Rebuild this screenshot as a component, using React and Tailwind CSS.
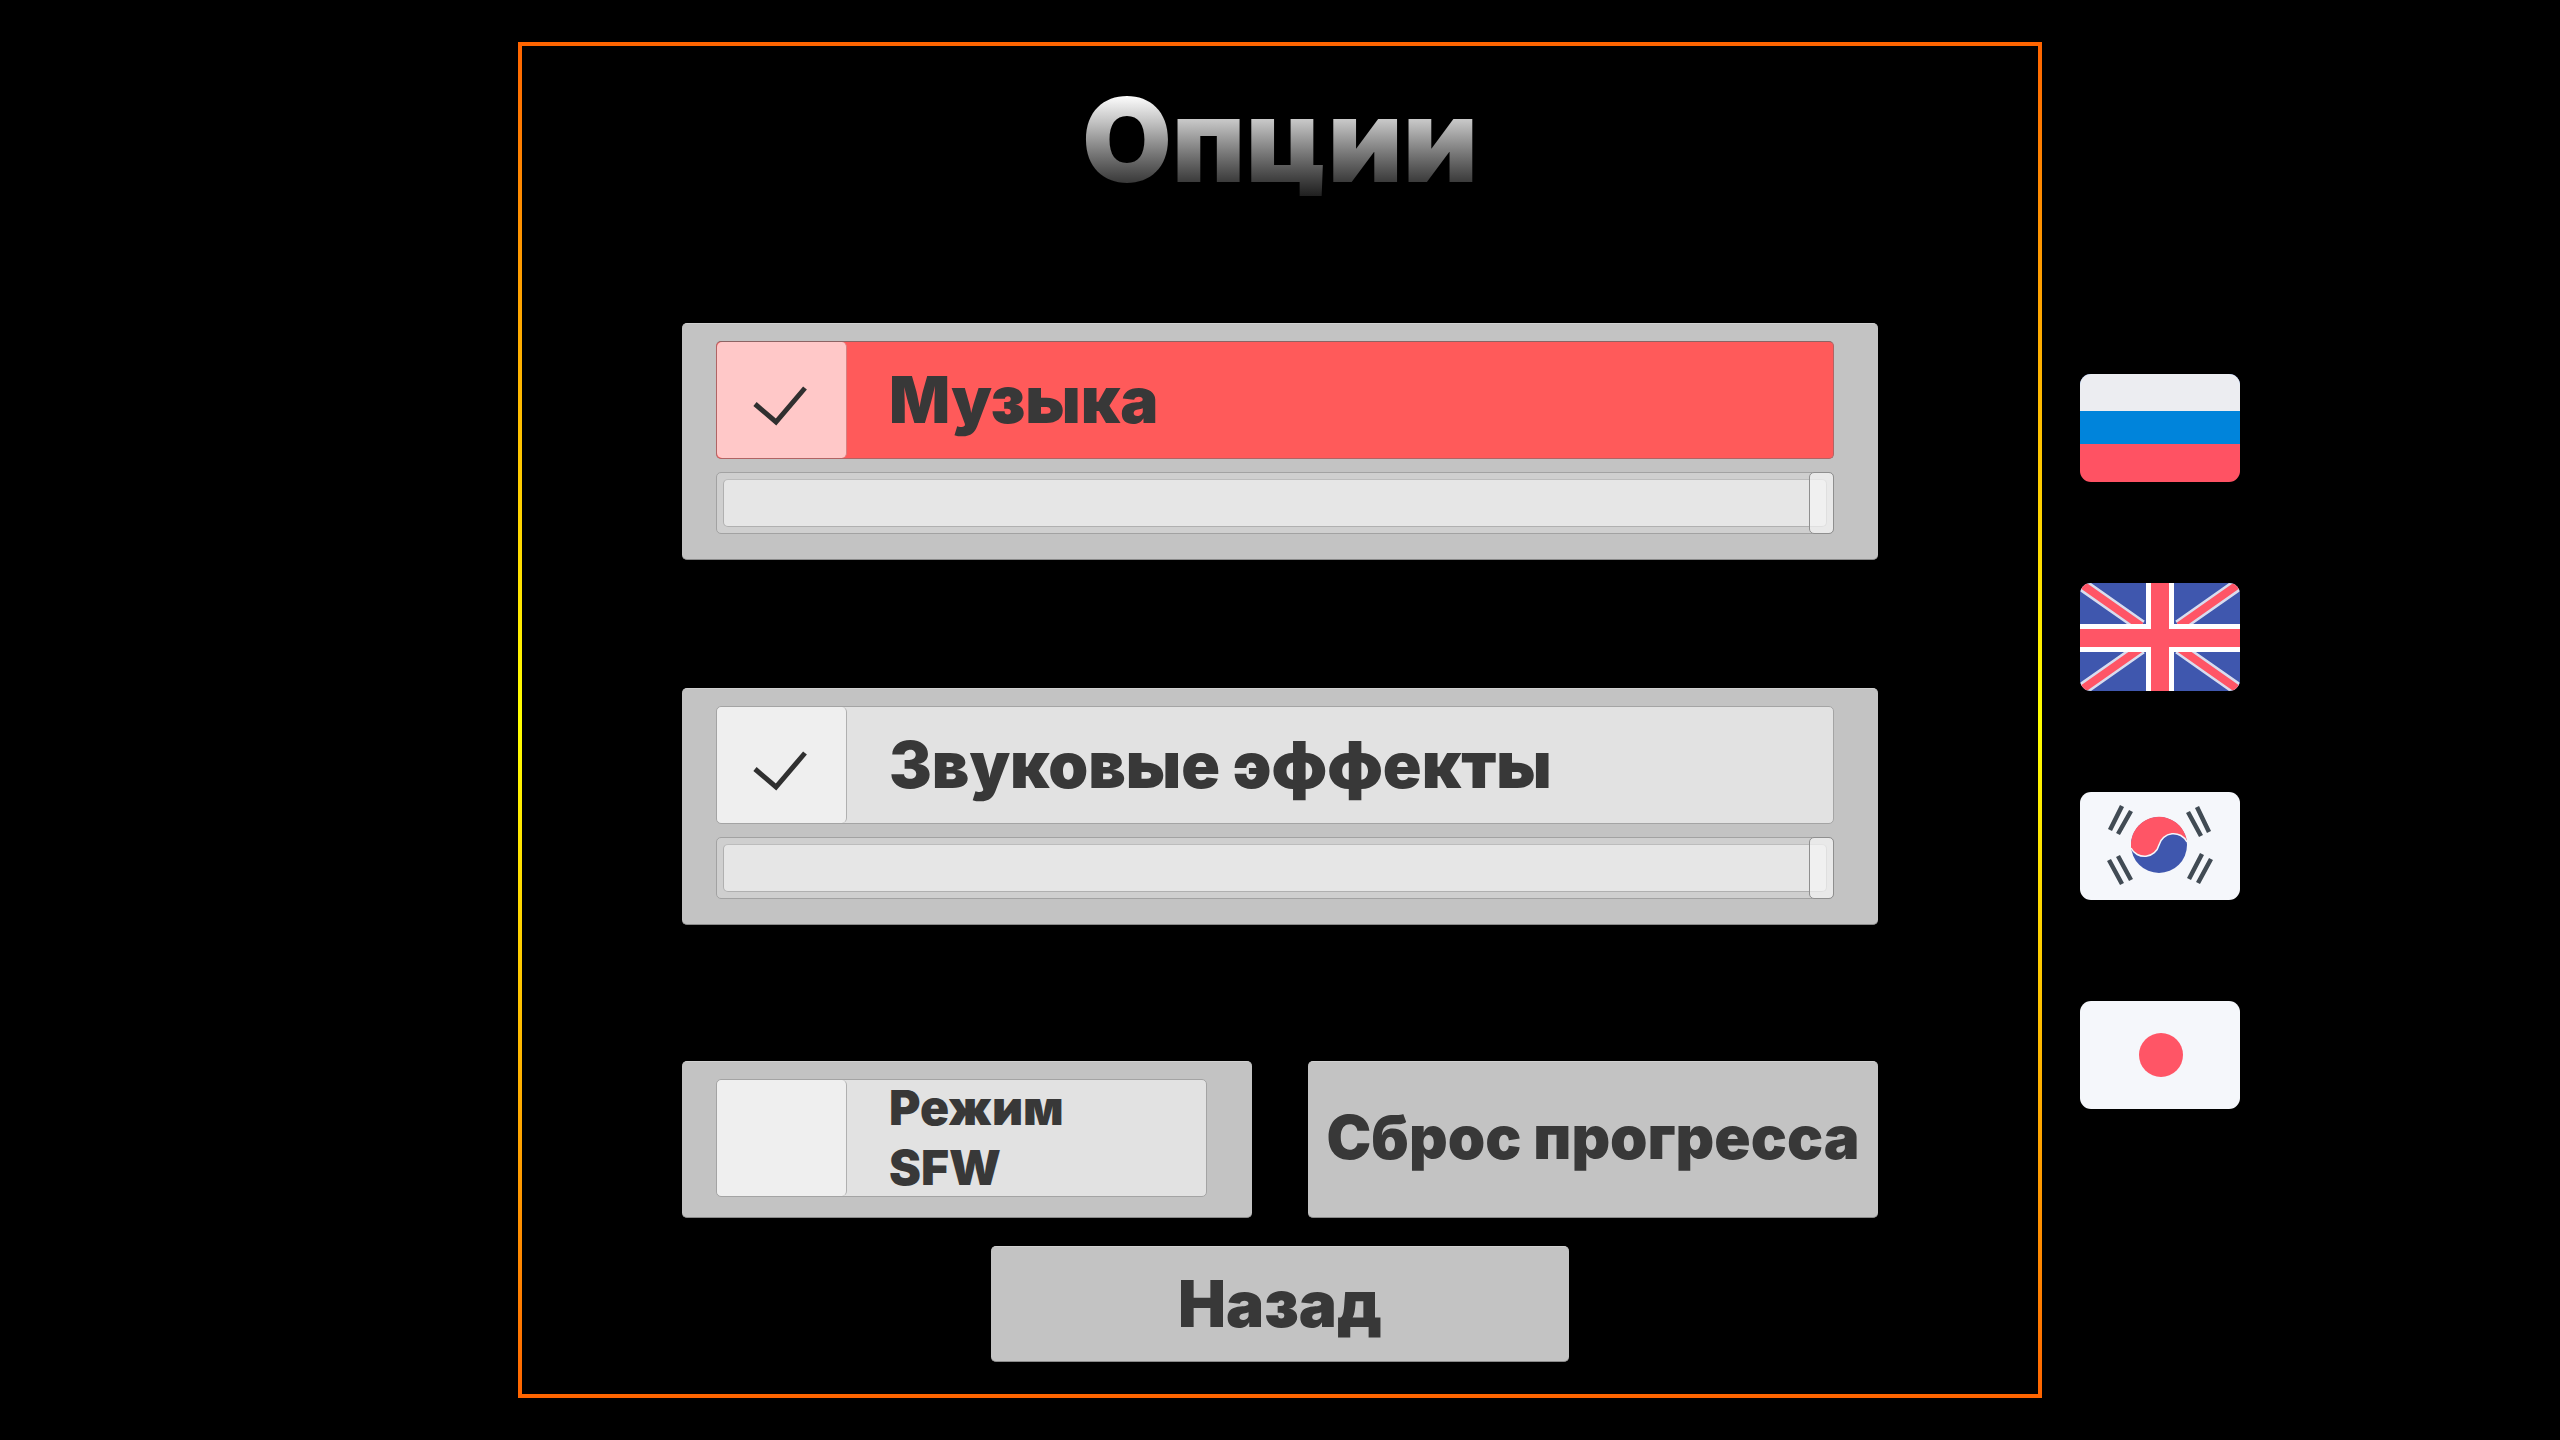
import React, { useState } from 'react';

const RussiaFlag = () => (
  <svg viewBox="0 0 160 108" className="w-full block" aria-hidden="true">
    <rect width="160" height="108" fill="#ff5263" />
    <rect width="160" height="70" fill="#0084db" />
    <rect width="160" height="37" fill="#ecedf1" />
  </svg>
);

const UkFlag = () => (
  <svg viewBox="0 0 160 108" className="w-full block" aria-hidden="true">
    <rect width="160" height="108" fill="#3f57ae" />
    <g stroke="#fff" strokeOpacity="0.8" strokeWidth="13">
      <path d="M-6 -4 61 43M166 -4 99 43M-6 112 61 65M166 112 99 65" />
    </g>
    <g stroke="#ff5566" strokeWidth="8">
      <path d="M-6 -4 61 43M166 -4 99 43M-6 112 61 65M166 112 99 65" />
    </g>
    <path d="M66 0h28v41h66v28H94v39H66V69H0V41h66z" fill="#fff" />
    <path d="M71 0h18v46h71v18H89v44H71V64H0V46h71z" fill="#ff5566" />
  </svg>
);

const KoreaFlag = () => (
  <svg viewBox="0 0 160 108" className="w-full block" aria-hidden="true">
    <rect width="160" height="108" fill="#f5f7fb" />
    <circle cx="79" cy="53" r="28" fill="#3f57ae" />
    <path d="M51 56A28 28 0 0 1 107 50A15 15 0 0 0 79 53A15 15 0 0 1 51 56z" fill="#ff5566" />
    <path d="M107 50A15 15 0 0 0 79 53A15 15 0 0 1 51 56" fill="none" stroke="#f5f7fb" strokeWidth="1.5" />
    <path
      d="M42 14 30 38M51 19 38 42M108 20 121 44M117 15 129 40M29 68 42 92M38 64 51 88M122 62 109 87M131 67 118 91"
      stroke="#414b54"
      strokeWidth="4.5"
    />
  </svg>
);

const JapanFlag = () => (
  <svg viewBox="0 0 160 108" className="w-full block" aria-hidden="true">
    <rect width="160" height="108" fill="#f5f7fb" />
    <circle cx="81" cy="54" r="22" fill="#ff5566" />
  </svg>
);

const languages = [
  { id: 'ru', label: 'Русский', Flag: RussiaFlag },
  { id: 'en', label: 'English', Flag: UkFlag },
  { id: 'ko', label: '한국어', Flag: KoreaFlag },
  { id: 'ja', label: '日本語', Flag: JapanFlag },
];

const Panel = ({ children }) => (
  <div className="flex flex-col gap-[13px] rounded-[5px] border-t border-b border-t-[#d0d0d0] border-b-[#8a8a8a] bg-[#c3c3c3] pt-[17px] pl-[34px] pr-[44px]">
    {children}
  </div>
);

const Toggle = ({ id, checked, onChange, highlighted, small, children }) => (
  <div
    className={`flex h-[118px] items-center rounded-[5px] border ${
      highlighted ? 'border-[#b06464] border-t-[#8c6464] bg-[#ff5a5a]' : 'border-[#a4a4a4] bg-[#e2e2e2]'
    }`}
  >
    <div className="relative h-full w-[130px] shrink-0">
      <input
        id={id}
        type="checkbox"
        checked={checked}
        onChange={(e) => onChange(e.target.checked)}
        className={`block h-full w-full appearance-none rounded-[5px] border-r ${
          highlighted ? 'border-[#d88080] bg-[#ffc8c8]' : 'border-[#b0b0b0] bg-[#efefef]'
        }`}
      />
      {checked && (
        <svg viewBox="0 0 130 116" className="pointer-events-none absolute inset-0 h-full w-full" aria-hidden="true">
          <path d="M38 62 59 80 88 46" fill="none" stroke="#303030" strokeWidth="5" />
        </svg>
      )}
    </div>
    <label
      htmlFor={id}
      className={`flex-1 pl-[42px] ${small ? 'text-[48px] leading-[60px]' : 'text-[64px] leading-[80px]'}`}
    >
      {children}
    </label>
  </div>
);

const VolumeSlider = ({ label, value, onChange }) => (
  <div className="relative mb-[25px] rounded-[5px] border border-[#a2a2a2] bg-[#cfcfcf] p-[6px]">
    <div
      className="h-[48px] rounded-[5px] border border-[#b0b0b0] border-t-[#bcbcbc] bg-[#e6e6e6]"
      style={{ width: `${value}%` }}
    />
    <input
      type="range"
      min="0"
      max="100"
      value={value}
      aria-label={label}
      onChange={(e) => onChange(Number(e.target.value))}
      className="absolute -inset-px appearance-none bg-transparent [&::-webkit-slider-thumb]:h-[62px] [&::-webkit-slider-thumb]:w-[25px] [&::-webkit-slider-thumb]:appearance-none [&::-webkit-slider-thumb]:rounded-[5px] [&::-webkit-slider-thumb]:border [&::-webkit-slider-thumb]:border-[#8f8f8f] [&::-webkit-slider-thumb]:bg-[#f4f4f4]/70"
    />
  </div>
);

const MenuButton = ({ className, children }) => (
  <button
    type="button"
    className={`rounded-[5px] border-t border-b border-t-[#d0d0d0] border-b-[#8a8a8a] bg-[#c3c3c3] whitespace-nowrap ${className}`}
  >
    {children}
  </button>
);

const App = () => {
  const [music, setMusic] = useState(true);
  const [sounds, setSounds] = useState(true);
  const [sfw, setSfw] = useState(false);
  const [musicVolume, setMusicVolume] = useState(100);
  const [soundVolume, setSoundVolume] = useState(100);
  const [, setLanguage] = useState('ru');

  return (
    <div className='grid min-h-screen grid-cols-[518px_1fr_518px] items-start bg-black py-[42px] font-["Inter","Noto_Sans",sans-serif] font-black text-[#383838]'>
      <main className="col-start-2 bg-linear-to-b from-[#ff6400] via-[#ffff00] to-[#ff6400] p-[4px]">
        <div className="flex flex-col bg-black px-[160px] pt-[38px] pb-[32px]">
          <h1 className="self-center bg-linear-to-b from-white from-10% via-[#c0c0c0] via-35% to-[#202020] bg-clip-text text-[116px] leading-[112px] text-transparent">
            Опции
          </h1>

          <div className="mt-[127px] flex flex-col gap-[128px]">
            <Panel>
              <Toggle id="music" checked={music} onChange={setMusic} highlighted>
                Музыка
              </Toggle>
              <VolumeSlider label="Музыка" value={musicVolume} onChange={setMusicVolume} />
            </Panel>
            <Panel>
              <Toggle id="sounds" checked={sounds} onChange={setSounds}>
                Звуковые эффекты
              </Toggle>
              <VolumeSlider label="Звуковые эффекты" value={soundVolume} onChange={setSoundVolume} />
            </Panel>
          </div>

          <div className="mt-[136px] grid grid-cols-2 gap-[56px]">
            <div className="flex flex-col rounded-[5px] border-t border-b border-t-[#d0d0d0] border-b-[#8a8a8a] bg-[#c3c3c3] pt-[17px] pr-[45px] pb-[20px] pl-[34px]">
              <Toggle id="sfw" checked={sfw} onChange={setSfw} small>
                Режим
                <br />
                SFW
              </Toggle>
            </div>
            <MenuButton className="pb-[6px] text-[60px] leading-[80px]">Сброс прогресса</MenuButton>
          </div>

          <MenuButton className="mt-[28px] w-[578px] self-center py-[17px] text-[64px] leading-[80px]">Назад</MenuButton>
        </div>
      </main>

      <nav className="flex flex-col items-start gap-[101px] pt-[332px] pl-[38px]">
        {languages.map(({ id, label, Flag }) => (
          <button
            key={id}
            type="button"
            aria-label={label}
            onClick={() => setLanguage(id)}
            className="w-[160px] overflow-hidden rounded-[11px]"
          >
            <Flag />
          </button>
        ))}
      </nav>
    </div>
  );
};

export default App;
